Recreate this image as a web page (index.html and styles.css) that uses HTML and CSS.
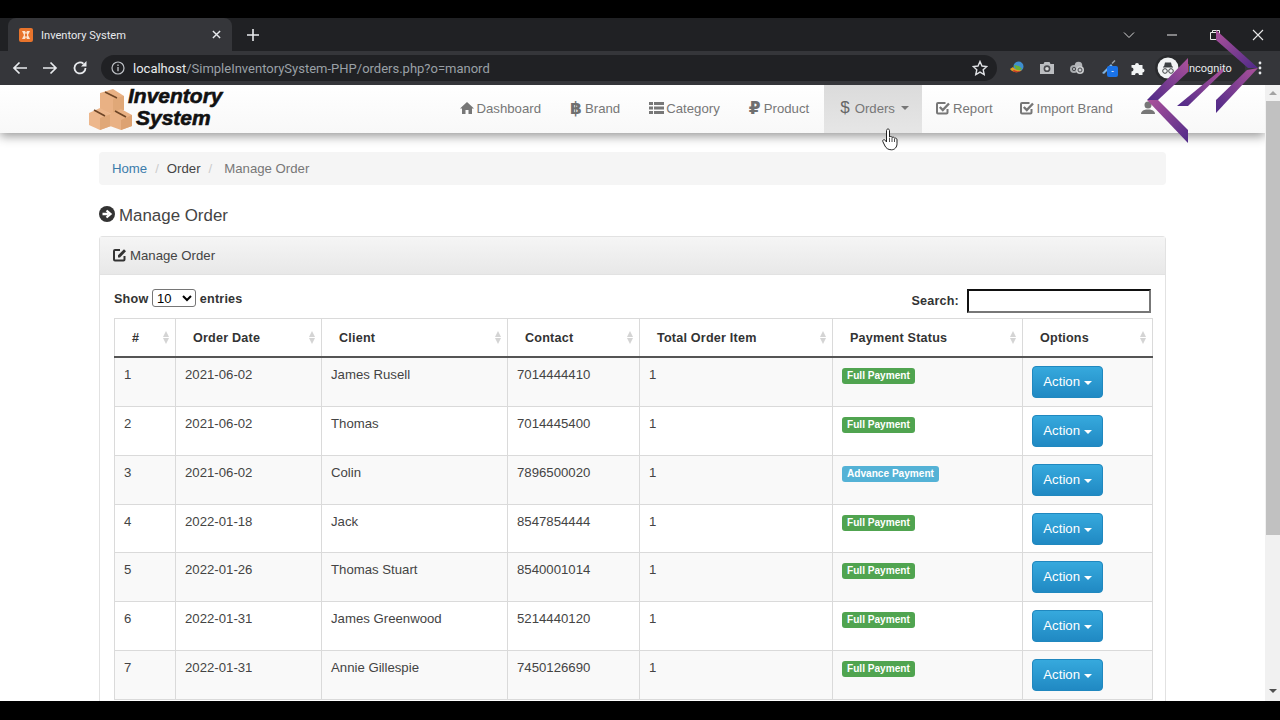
FILE: index.html
```html
<!DOCTYPE html>
<html lang="en">
<head>
<meta charset="utf-8">
<title>Inventory System</title>
<link rel="stylesheet" href="styles.css">
</head>
<body>
<div class="letterbox-top"></div>
<header class="chrome">
  <div class="tabstrip">
    <div class="tab">
      <svg class="favicon" viewBox="0 0 14 14"><rect width="14" height="14" rx="2" fill="#e8742c"/><path d="M3 3h3l1 2 1-2h3L9 7l2 4H8L7 9l-1 2H3l2-4z" fill="#fbe3cf"/><path d="M6 5.500h2v3H6z" fill="#e8742c"/></svg>
      <span class="tab-title">Inventory System</span>
      <svg class="tab-x" viewBox="0 0 10 10"><path d="M1 1l8 8M9 1l-8 8" stroke="#e8eaed" stroke-width="1.6"/></svg>
    </div>
    <svg class="tab-plus" viewBox="0 0 12 12"><path d="M6 0v12M0 6h12" stroke="#e8eaed" stroke-width="1.6"/></svg>
    <div class="window-controls">
      <svg viewBox="0 0 12 12"><path d="M1 3.500l5 5 5-5" fill="none" stroke="#d8d8d8"/></svg>
      <svg viewBox="0 0 12 12"><path d="M1 6h10" stroke="#e8e8e8"/></svg>
      <svg viewBox="0 0 12 12"><path d="M1.500 3.500h7v7h-7zM3.500 3.500v-2h7v7h-2" fill="none" stroke="#e8e8e8"/></svg>
      <svg viewBox="0 0 12 12"><path d="M1 1l10 10M11 1L1 11" stroke="#e8e8e8" stroke-width="1.1"/></svg>
    </div>
  </div>
  <div class="toolbar">
    <svg class="tool" viewBox="0 0 16 16"><path d="M15 8H2M7.500 2.500L2 8l5.500 5.500" fill="none" stroke="#e8eaed" stroke-width="1.7"/></svg>
    <svg class="tool" viewBox="0 0 16 16"><path d="M1 8h13M8.500 2.500L14 8l-5.500 5.500" fill="none" stroke="#e8eaed" stroke-width="1.7"/></svg>
    <svg class="tool" viewBox="0 0 16 16"><path d="M13.500 8A5.500 5.500 0 1 1 11.500 3.700" fill="none" stroke="#e8eaed" stroke-width="1.8"/><path d="M14.500 1v5.500H9z" fill="#e8eaed"/></svg>
    <div class="omnibox">
      <svg class="info" viewBox="0 0 14 14"><circle cx="7" cy="7" r="6" fill="none" stroke="#bdc1c6" stroke-width="1.2"/><path d="M7 6v4.200M7 3.600v1.300" stroke="#bdc1c6" stroke-width="1.300"/></svg>
      <span class="url"><span class="host">localhost</span>/SimpleInventorySystem-PHP/orders.php?o=manord</span>
      <svg class="star" viewBox="0 0 16 16"><path d="M8 1.500l2 4.500 4.800.5-3.600 3.200 1 4.800L8 12.100l-4.200 2.400 1-4.800L1.200 6.500 6 6z" fill="none" stroke="#e0e2e5" stroke-width="1.400"/></svg>
    </div>
    <div class="extensions">
      <svg class="ext" viewBox="0 0 16 16"><circle cx="9.500" cy="6.500" r="5" fill="#3f8fd0"/><path d="M5 5l5 1 3 3-5 2z" fill="#6bb034"/><path d="M1 9c3 4 8 4 12 1-3 .5-6 .5-9-3z" fill="#e0a020"/><path d="M3.500 11c3 2 6 1.500 8.500 0-3 .3-5 .3-7-1z" fill="#c83a28"/></svg>
      <svg class="ext" viewBox="0 0 16 16"><path d="M1 4h3.500l1-2h5l1 2H15v10H1z" fill="#bcbec1"/><circle cx="8" cy="8.700" r="3.400" fill="#4b4c50"/><circle cx="8" cy="8.700" r="1.800" fill="#d8d8d8"/></svg>
      <svg class="ext" viewBox="0 0 16 16"><circle cx="5" cy="9" r="4" fill="#a8abae"/><circle cx="9.500" cy="5.500" r="3.800" fill="#b4b6b9"/><circle cx="11" cy="10" r="4" fill="#c8cacc"/><circle cx="11" cy="10" r="2" fill="none" stroke="#4b4c50"/><circle cx="5" cy="9" r="1.700" fill="none" stroke="#4b4c50"/></svg>
      <span class="ext-pen">
        <svg class="ext" viewBox="0 0 16 16"><path d="M1 13L10 4l1.500 1.500L3 14z" fill="#7fb2e0"/><path d="M11 3.500l3-3" stroke="#9aa0a6" stroke-width="1.500"/></svg>
        <span class="ext-badge">-</span>
      </span>
      <svg class="ext puzzle" viewBox="0 0 16 16"><path d="M1.500 5H5a2 2 0 1 1 4 0h3.500v3.500a2 2 0 1 1 0 4V15H9a2 2 0 1 0-4 0H1.500v-3.500a2 2 0 1 0 0-4z" fill="#f1f3f4"/></svg>
    </div>
    <div class="profile">
      <svg class="avatar" viewBox="0 0 22 22"><circle cx="11" cy="11" r="10.500" fill="#f1f3f4"/><path d="M6 9.500h10v1H6zM8 5.500h6l1 4H7z" fill="#3c4043"/><circle cx="8" cy="14" r="2.300" fill="none" stroke="#3c4043"/><circle cx="14" cy="14" r="2.300" fill="none" stroke="#3c4043"/></svg>
      <span class="incognito">Incognito</span>
    </div>
    <svg class="kebab" viewBox="0 0 4 14"><circle cx="2" cy="2" r="1.400" fill="#e8eaed"/><circle cx="2" cy="7" r="1.400" fill="#e8eaed"/><circle cx="2" cy="12" r="1.400" fill="#e8eaed"/></svg>
  </div>
</header>

<div class="viewport">
  <div class="page">
    <nav class="navbar">
      <a class="brand">
        <svg class="brand-boxes" viewBox="0 0 44 42">
          <path d="M12 5l13-4 11 7v14l-11 5-13-6z" fill="#e9b184"/>
          <path d="M25 11l11-3v14l-11 5z" fill="#e0a878"/>
          <path d="M1 25l11-5 11 6v12l-11 4-11-5z" fill="#edb78c"/>
          <path d="M12 30l11-4v12l-11 4z" fill="#e0a878"/>
          <path d="M22 26l11-5 11 6v11l-11 4-11-4z" fill="#e9b184"/>
          <path d="M33 32l11-5v11l-11 4z" fill="#dda272"/>
          <path d="M17 4l12 6M6 22l11 6M27 23l11 6" stroke="#6d4526" stroke-width="1.600" fill="none"/>
        </svg>
        <span class="brand-text"><span>Inventory</span><span class="brand-line2">System</span></span>
      </a>
      <ul class="nav">
        <li class="nav-item"><svg class="gi" viewBox="0 0 14 14"><path d="M7 1l7 6.500h-2V13H8.500V9h-3v4H2V7.500H0z"/></svg><span>Dashboard</span></li>
        <li class="nav-item"><span class="gl">฿</span><span>Brand</span></li>
        <li class="nav-item nav-cat"><svg class="gi gi-wide" viewBox="0 0 15 14"><path d="M0 1h4v3H0zM5 1h10v3H5zM0 5.500h4v3H0zM5 5.500h10v3H5zM0 10h4v3H0zM5 10h10v3H5z"/></svg><span>Category</span></li>
        <li class="nav-item"><span class="gl">₽</span><span>Product</span></li>
        <li class="nav-item nav-orders"><span class="dollar">$</span><span>Orders</span><span class="caret"></span></li>
        <li class="nav-item nav-report"><svg class="gi" viewBox="0 0 14 14"><path d="M11.500 8v3.500a1 1 0 0 1-1 1H2a1 1 0 0 1-1-1V3a1 1 0 0 1 1-1h7.500" fill="none" stroke="#777" stroke-width="2"/><path d="M3.800 6l3 3L13 2.500" fill="none" stroke="#777" stroke-width="2.400"/></svg><span>Report</span></li>
        <li class="nav-item nav-import"><svg class="gi" viewBox="0 0 14 14"><path d="M11.500 8v3.500a1 1 0 0 1-1 1H2a1 1 0 0 1-1-1V3a1 1 0 0 1 1-1h7.500" fill="none" stroke="#777" stroke-width="2"/><path d="M3.800 6l3 3L13 2.500" fill="none" stroke="#777" stroke-width="2.400"/></svg><span>Import Brand</span></li>
        <li class="nav-item nav-user"><svg class="gi" viewBox="0 0 14 14"><circle cx="7" cy="4" r="3.500"/><path d="M0 13c0-3 3-4 5-4.500h4c2 .5 5 1.500 5 4.500z"/></svg></li>
      </ul>
    </nav>

    <main class="container">
      <ol class="breadcrumb">
        <li class="crumb-link">Home</li>
        <li class="crumb-sep">/</li>
        <li>Order</li>
        <li class="crumb-sep">/</li>
        <li class="crumb-active">Manage Order</li>
      </ol>

      <h1 class="page-title">
        <svg class="title-icon" viewBox="0 0 16 16"><circle cx="8" cy="8" r="8" fill="#333"/><path d="M3.500 8h6M7.500 4.500L11.500 8l-4 3.500" fill="none" stroke="#fff" stroke-width="2.300"/></svg>
        Manage Order
      </h1>

      <section class="panel">
        <div class="panel-heading">
          <svg class="edit-icon" viewBox="0 0 14 14"><path d="M11.500 8v3.500a1 1 0 0 1-1 1H2a1 1 0 0 1-1-1V3a1 1 0 0 1 1-1h5" fill="none" stroke="#333" stroke-width="2"/><path d="M5 9.500V7.300L11 1.200l2 2L7 9.500z" fill="#333"/></svg>
          Manage Order
        </div>
        <div class="panel-body">
          <div class="dt-controls">
            <label class="dt-length">Show <select class="dt-select"><option>10</option></select> entries</label>
            <label class="dt-search">Search: <input class="dt-input" type="text"></label>
          </div>
          <table class="table">
            <colgroup>
              <col class="c1"><col class="c2"><col class="c3"><col class="c4"><col class="c5"><col class="c6"><col class="c7">
            </colgroup>
            <thead>
              <tr>
                <th>#</th><th>Order Date</th><th>Client</th><th>Contact</th><th>Total Order Item</th><th>Payment Status</th><th>Options</th>
              </tr>
            </thead>
            <tbody>
              <tr><td>1</td><td>2021-06-02</td><td>James Rusell</td><td>7014444410</td><td>1</td><td><span class="label label-success">Full Payment</span></td><td><button class="btn">Action <span class="caret caret-white"></span></button></td></tr>
              <tr><td>2</td><td>2021-06-02</td><td>Thomas</td><td>7014445400</td><td>1</td><td><span class="label label-success">Full Payment</span></td><td><button class="btn">Action <span class="caret caret-white"></span></button></td></tr>
              <tr><td>3</td><td>2021-06-02</td><td>Colin</td><td>7896500020</td><td>1</td><td><span class="label label-info">Advance Payment</span></td><td><button class="btn">Action <span class="caret caret-white"></span></button></td></tr>
              <tr class="row-short"><td>4</td><td>2022-01-18</td><td>Jack</td><td>8547854444</td><td>1</td><td><span class="label label-success">Full Payment</span></td><td><button class="btn">Action <span class="caret caret-white"></span></button></td></tr>
              <tr><td>5</td><td>2022-01-26</td><td>Thomas Stuart</td><td>8540001014</td><td>1</td><td><span class="label label-success">Full Payment</span></td><td><button class="btn">Action <span class="caret caret-white"></span></button></td></tr>
              <tr><td>6</td><td>2022-01-31</td><td>James Greenwood</td><td>5214440120</td><td>1</td><td><span class="label label-success">Full Payment</span></td><td><button class="btn">Action <span class="caret caret-white"></span></button></td></tr>
              <tr><td>7</td><td>2022-01-31</td><td>Annie Gillespie</td><td>7450126690</td><td>1</td><td><span class="label label-success">Full Payment</span></td><td><button class="btn">Action <span class="caret caret-white"></span></button></td></tr>
            </tbody>
          </table>
        </div>
      </section>
    </main>
  </div>
  <div class="scrollbar">
    <span class="arrow-up"></span>
    <span class="thumb"></span>
    <span class="arrow-down"></span>
  </div>
</div>
<div class="letterbox-bottom"></div>

<svg class="cursor" viewBox="0 0 16 24"><path d="M4.500 2.500c0-2 3-2 3 0V9c1-1 2.500-.5 2.500.5 1-.8 2.300-.3 2.500.8 1-.6 2.500 0 2.500 1.500v4c0 3-2 6-5.500 6S4 20 3 18L.8 13.500c-.6-1.600 1.400-2.500 2.400-1.200l1.300 1.700z" fill="#fff" stroke="#222" stroke-width="1"/><path d="M7.500 10v4M10 10v4M12.500 11v3" stroke="#222" stroke-width=".8"/></svg>

<svg class="overlay" viewBox="0 0 120 120">
  <defs>
    <linearGradient id="g1" x1="0" y1="0" x2="1" y2="1"><stop offset="0" stop-color="#ac529b"/><stop offset="1" stop-color="#4f2a88"/></linearGradient>
    <linearGradient id="g2" x1="1" y1="0" x2="0" y2="1"><stop offset="0" stop-color="#ac529b"/><stop offset="1" stop-color="#4f2a88"/></linearGradient>
  </defs>
  <path d="M76 5l42 38h-10L76 15z" fill="url(#g1)"/>
  <path d="M118 43L76 88V75l31-30z" fill="url(#g2)"/>
  <path d="M83 43L37 81h11l35-34z" fill="url(#g2)"/>
  <path d="M48 33L7 75h11l30-28z" fill="url(#g2)"/>
  <path d="M7 75h11l30 30v13z" fill="url(#g1)"/>
</svg>
</body>
</html>
```
FILE: styles.css
```css
* { box-sizing: border-box; }
html, body { margin: 0; padding: 0; height: 720px; overflow: hidden; }
body {
  display: flex;
  flex-direction: column;
  background: #000;
  font-family: "Liberation Sans", Arial, sans-serif;
  font-size: 13.2px;
  color: #444;
}
.letterbox-top { height: 18px; flex: none; background: #000; }
.letterbox-bottom { height: 19px; flex: none; background: #000; }

/* browser chrome */
.chrome { flex: none; height: 67px; font-family: Roboto, "Liberation Sans", sans-serif; }
.tabstrip { height: 33px; background: #202124; display: flex; align-items: center; padding-left: 8px; }
.tab {
  width: 224px; height: 33px; background: #35363a;
  border-radius: 8px 8px 0 0;
  display: flex; align-items: center; padding: 0 11px;
}
.favicon { width: 14px; height: 14px; flex: none; }
.tab-title { color: #e8eaed; font-size: 11.100px; margin-left: 8px; padding-top: 1px; flex: 1; }
.tab-x { width: 9px; height: 9px; flex: none; }
.tab-plus { width: 12px; height: 12px; margin-left: 15px; }
.window-controls { margin-left: auto; display: flex; gap: 31px; padding-right: 16px; }
.window-controls svg { width: 12px; height: 12px; }
.toolbar { height: 34px; background: #35363a; display: flex; align-items: center; padding-left: 12px; }
.tool { width: 16px; height: 16px; margin-right: 14px; flex: none; }
.omnibox {
  width: 896px; height: 26px; margin-left: -1px; border-radius: 13px; background: #202124;
  display: flex; align-items: center; padding: 0 10px;
}
.info { width: 14px; height: 14px; flex: none; }
.url { color: #9aa0a6; font-size: 13px; margin-left: 8px; flex: 1; white-space: nowrap; }
.host { color: #e8eaed; }
.star { width: 16px; height: 16px; flex: none; margin-right: -1px; }
.extensions { display: flex; align-items: center; gap: 14px; margin-left: 12px; }
.ext { width: 16px; height: 16px; flex: none; display: block; }
.ext-pen { position: relative; display: block; margin-left: 2px; }
.ext-badge {
  position: absolute; left: 6px; top: 6px; width: 11px; height: 11px; background: #1a73e8;
  color: #fff; font-size: 9px; line-height: 10px; text-align: center; border-radius: 2px;
}
.puzzle { margin-left: -1px; }
.profile {
  margin-left: 9px; width: 90px; height: 26px; border-radius: 13px; background: #292a2d;
  display: flex; align-items: center; padding-left: 2px;
}
.avatar { width: 22px; height: 22px; flex: none; }
.incognito { color: #e8eaed; font-size: 11px; margin-left: 7px; }
.kebab { width: 4px; height: 14px; margin-left: 13px; flex: none; }

/* viewport */
.viewport { flex: 1; min-height: 0; display: flex; background: #fff; overflow: hidden; }
.page { flex: 1; min-width: 0; overflow: hidden; }
.scrollbar {
  width: 15px; flex: none; background: #f1f1f1;
  display: flex; flex-direction: column; align-items: center;
}
.arrow-up { margin-top: 6px; border: 4px solid transparent; border-top: 0; border-bottom: 4px solid #a3a3a3; }
.thumb { width: 14px; height: 434px; margin-top: 6px; margin-left: 1px; background: #c1c1c1; }
.arrow-down { margin-top: 154px; border: 4px solid transparent; border-bottom: 0; border-top: 4px solid #505050; }

/* navbar */
.navbar {
  height: 48px; display: flex; padding-left: 88px;
  background: linear-gradient(#fff, #f8f8f8);
  box-shadow: 0 3px 10px rgba(0,0,0,.42);
  position: relative; z-index: 2;
  clip-path: inset(0 0 -30px 0);
}
.brand { width: 357px; flex: none; display: flex; }
.brand-boxes { width: 44px; height: 42px; margin-top: 3px; flex: none; }
.brand-text {
  display: flex; flex-direction: column; margin-left: -4px;
  font-family: "Liberation Sans", sans-serif; font-weight: 700; font-style: italic;
  font-size: 21px; line-height: 22px; color: #111;
  -webkit-text-stroke: .6px #111;
}
.brand-line2 { margin-left: 8px; }
.nav { list-style: none; margin: 0; padding: 0; display: flex; }
.nav-item {
  display: flex; align-items: center; gap: 3px; height: 48px; padding: 0 14.500px 2px;
  color: #777; font-size: 13.2px; white-space: nowrap;
}
.nav-orders { background: linear-gradient(#dbdbdb, #e6e6e6); padding: 0 13px 2px 16.500px; gap: 4px; }
.nav-report { padding: 0 14px 2px; }
.nav-import { padding: 0 14px 2px 13px; }
.nav-user { padding: 0 14px 2px; }
.gi { width: 14px; height: 14px; fill: #777; flex: none; }
.gi-wide { width: 15px; }
.gl { font-family: "DejaVu Sans", sans-serif; font-weight: 700; font-size: 17px; line-height: 17px; width: 12px; color: #6f6f6f; display: flex; justify-content: center; }
.nav-cat { gap: 2px; }
.dollar { font-size: 17px; margin-right: 1px; color: #666; }
.caret { display: inline-block; border: 4px solid transparent; border-bottom: 0; border-top: 4px solid #777; margin-left: 2px; }
.caret-white { border-top-color: #fff; margin-left: 0; vertical-align: middle; }

/* content */
.container { margin: 19px 99px 0; width: 1067px; }
.breadcrumb {
  list-style: none; margin: 0; height: 33px; padding: 0 13px 1px; background: #f5f5f5; border-radius: 4px;
  display: flex; align-items: center; gap: 8px;
}
.crumb-link { color: #3b7cab; }
.crumb-sep { color: #ccc; }
.crumb-active { color: #777; margin-left: 4px; }
.page-title {
  margin: 17px 0 8px; height: 26px; padding-top: 1px; font-size: 16.900px; font-weight: 400; line-height: 26px; color: #444;
  display: flex; align-items: center; gap: 4px;
}
.title-icon { width: 16px; height: 16px; flex: none; margin-top: -4px; }
.panel { border: 1px solid #e2e2e2; border-bottom: 0; border-radius: 4px 4px 0 0; height: 600px; }
.panel-heading {
  height: 38px; padding-left: 13px; padding-bottom: 1px; display: flex; align-items: center; gap: 3px;
  background: linear-gradient(#f5f5f5, #e8e8e8);
  border-bottom: 1px solid #e2e2e2; font-size: 13.2px; color: #444;
}
.edit-icon { width: 14px; height: 14px; flex: none; }
.panel-body { padding: 14px 14px 0; }
.dt-controls { display: flex; justify-content: space-between; height: 29px; }
.dt-length, .dt-search { font-weight: 700; font-size: 12.600px; color: #333; letter-spacing: .2px; }
.dt-length { line-height: 18px; }
.dt-select {
  width: 44px; height: 18px; font-family: "Liberation Sans", sans-serif; font-size: 13px;
  background: #fff; border: 1px solid #767676; border-radius: 3px; padding: 0; margin: 0;
}
.dt-search { display: flex; align-items: flex-start; gap: 8px; line-height: 24px; }
.dt-input { width: 184px; height: 24px; border: 2px solid; border-color: #111 #777 #777 #111; background: #fff; }

.table { width: 1038px; table-layout: fixed; border-collapse: collapse; font-size: 13.2px; }
.c1 { width: 61px; } .c2 { width: 146px; } .c3 { width: 186px; } .c4 { width: 132px; }
.c5 { width: 193px; } .c6 { width: 190px; } .c7 { width: 130px; }
.table th, .table td { border: 1px solid #dadada; }
.table th {
  height: 38px; padding: 1px 17px 0; text-align: left; font-size: 12.600px; font-weight: 700; color: #333;
  letter-spacing: .2px; border-bottom: 2px solid #555;
  position: relative;
}
.table th::before, .table th::after {
  content: ""; position: absolute; right: 6px; width: 0; height: 0;
  border-left: 3.500px solid transparent; border-right: 3.500px solid transparent;
}
.table th::before { top: 12px; border-bottom: 6px solid #d4d4d4; }
.table th::after { top: 19px; border-top: 6px solid #d4d4d4; }
.table td { height: 48px; padding: 8px 9px; vertical-align: top; line-height: 18px; color: #444; }
.table .row-short td { padding-bottom: 7px; }
.table tbody tr:nth-child(odd) td { background: #f9f9f9; }
.label {
  display: inline-block; height: 16px; margin-top: 2px; padding: 0 5px; vertical-align: top;
  border-radius: 3px; color: #fff; font-size: 10.100px; font-weight: 700; line-height: 16px;
}
.label-success { background: #50a450; }
.label-info { background: #54b2d6; }
.btn {
  width: 71px; height: 32px; padding: 0; display: block;
  border: 1px solid #2088bf; border-radius: 4px; color: #fff;
  font-family: "Liberation Sans", sans-serif; font-size: 13.2px;
  background: linear-gradient(#36a9dd, #2089c3);
}

/* overlays */
.cursor { position: absolute; left: 882px; top: 128px; width: 16px; height: 24px; z-index: 5; }
.overlay { position: absolute; left: 1140px; top: 25px; width: 120px; height: 120px; z-index: 6; }
```
